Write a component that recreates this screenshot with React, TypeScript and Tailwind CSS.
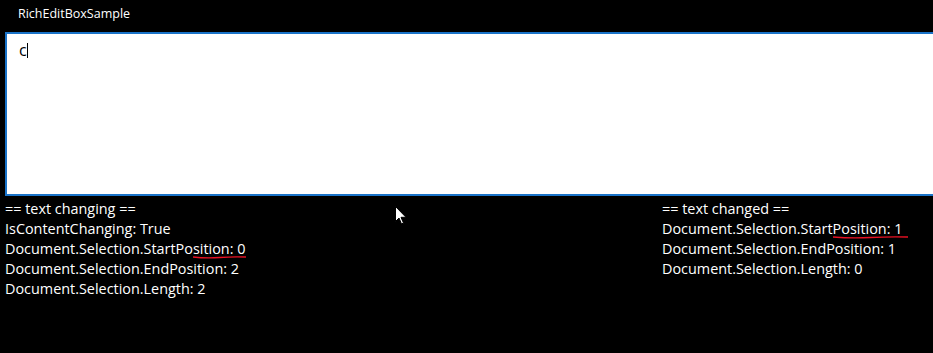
import React from "react";

const font = { fontFamily: '"Open Sans", "Noto Sans", sans-serif' };

// wavy red line drawn under a misspelled / flagged run
const Squiggle = ({ width }: { width: number }) => (
  <svg className="absolute left-0 -bottom-[1px]" width={width} height="4" viewBox={`0 0 ${width} 4`}>
    <path
      d={`M0 2 Q ${width * 0.25} 3.5 ${width * 0.5} 2.5 T ${width} 2`}
      stroke="#e81123"
      strokeWidth="1.3"
      fill="none"
    />
  </svg>
);

const Line = ({ children }: { children: React.ReactNode }) => (
  <div className="h-5 leading-5 whitespace-nowrap">{children}</div>
);

export default function App() {
  return (
    <div className="w-[933px] h-[353px] bg-black text-white overflow-hidden relative" style={font}>
      {/* title */}
      <div className="h-8 pl-[18px] pt-[4px] text-[12.5px] leading-5">RichEditBoxSample</div>

      {/* rich edit box */}
      <div className="ml-[5px] w-[940px] h-[164px] bg-white border-2 border-[#1a73c8] relative">
        <div className="absolute left-[12px] top-[6px] flex items-center text-black text-[16px] leading-5">
          <span>c</span>
          <span className="w-px h-[15px] bg-black mt-[1px]" />
        </div>
      </div>

      {/* event output */}
      <div className="flex pt-[3px] text-[14.4px]">
        <div className="w-[662px] pl-[5px]">
          <Line>== text changing ==</Line>
          <Line>IsContentChanging: True</Line>
          <Line>
            Document.Selection.StartPo
            <span className="relative">
              sition: 0
              <Squiggle width={53} />
            </span>
          </Line>
          <Line>Document.Selection.EndPosition: 2</Line>
          <Line>Document.Selection.Length: 2</Line>
        </div>
        <div>
          <Line>== text changed ==</Line>
          <Line>
            Document.Selection.Start
            <span className="relative">
              Position: 1
              <Squiggle width={75} />
            </span>
          </Line>
          <Line>Document.Selection.EndPosition: 1</Line>
          <Line>Document.Selection.Length: 0</Line>
        </div>
      </div>

      {/* mouse pointer */}
      <svg className="absolute left-[395px] top-[206px]" width="12" height="19" viewBox="0 0 12 19">
        <path d="M0.5 0.5 L0.5 15.5 L4 12 L6.5 18 L8.5 17 L6 11.3 L11 11.3 Z" fill="#fff" stroke="#000" strokeWidth="1" />
      </svg>
    </div>
  );
}
